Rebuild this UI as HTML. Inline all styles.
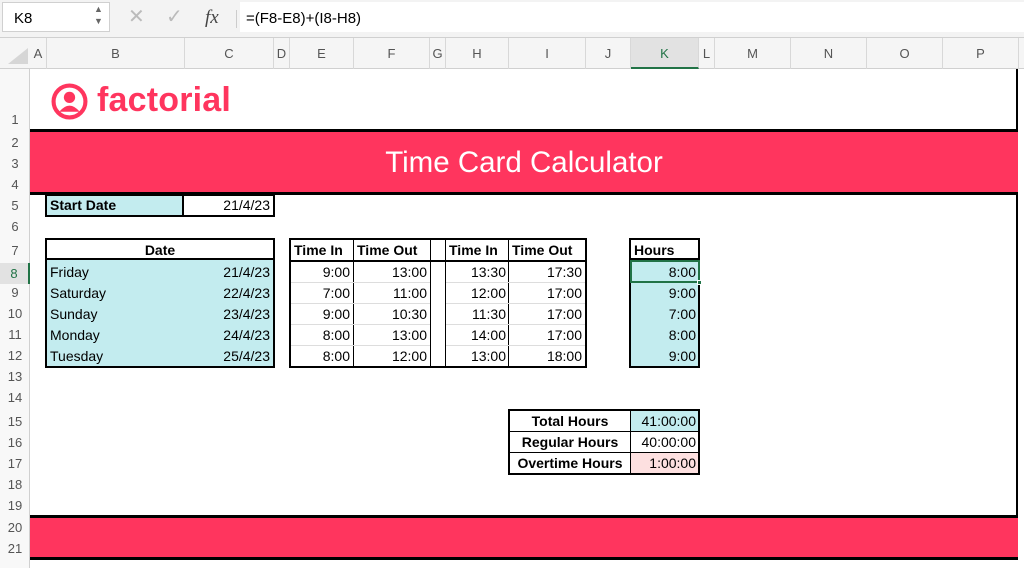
<!DOCTYPE html>
<html><head><meta charset="utf-8"><style>
*{margin:0;padding:0;box-sizing:border-box}
body{width:1024px;height:568px;overflow:hidden;background:#fff;font-family:"Liberation Sans",Arial,sans-serif;position:relative}
.a{position:absolute}
.t{position:absolute;font-size:14px;line-height:21px;color:#000;white-space:nowrap}
.r{text-align:right}
.c{text-align:center}
.b{font-weight:bold}
.col{position:absolute;top:38px;height:31px;line-height:31px;font-size:13px;color:#555;text-align:center;border-right:1px solid #d8d8d8}
.rn{position:absolute;left:0;width:30px;font-size:13px;color:#555;text-align:center}
</style></head><body>
<div class="a" style="left:0;top:0;width:1024px;height:38px;background:#f3f3f3;border-bottom:1px solid #d0d0d0"></div>
<div class="a" style="left:2px;top:2px;width:108px;height:30px;background:#fff;border:1px solid #d0d0d0"></div>
<div class="t" style="left:14px;top:8px;font-size:15px">K8</div>
<div class="t" style="left:94px;top:3px;font-size:9px;color:#666;line-height:12px">▲<br>▼</div>
<div class="t" style="left:128px;top:7px;font-size:20px;color:#bbb">✕</div>
<div class="t" style="left:166px;top:7px;font-size:20px;color:#bbb">✓</div>
<div class="t" style="left:205px;top:7px;font-size:19px;font-style:italic;font-family:'Liberation Serif',serif;color:#444">fx</div>
<div class="a" style="left:236px;top:10px;width:1px;height:18px;background:#ccc"></div>
<div class="a" style="left:240px;top:2px;width:784px;height:30px;background:#fff"></div>
<div class="t" style="left:246px;top:8px;font-size:15px">=(F8-E8)+(I8-H8)</div>
<div class="a" style="left:0;top:38px;width:1024px;height:31px;background:#f5f5f5;border-bottom:1px solid #d0d0d0"></div>
<div class="a" style="left:8px;top:48px;width:0;height:0;border-left:20px solid transparent;border-bottom:16px solid #d6d6d6"></div>
<div class="col" style="left:30px;width:17px">A</div>
<div class="col" style="left:47px;width:138px">B</div>
<div class="col" style="left:185px;width:89px">C</div>
<div class="col" style="left:274px;width:16px">D</div>
<div class="col" style="left:290px;width:64px">E</div>
<div class="col" style="left:354px;width:76px">F</div>
<div class="col" style="left:430px;width:16px">G</div>
<div class="col" style="left:446px;width:63px">H</div>
<div class="col" style="left:509px;width:77px">I</div>
<div class="col" style="left:586px;width:45px">J</div>
<div class="col" style="left:631px;width:68px;color:#217346;background:#e2e2e2;border-bottom:2px solid #217346">K</div>
<div class="col" style="left:699px;width:16px">L</div>
<div class="col" style="left:715px;width:76px">M</div>
<div class="col" style="left:791px;width:76px">N</div>
<div class="col" style="left:867px;width:76px">O</div>
<div class="col" style="left:943px;width:76px">P</div>
<div class="a" style="left:0;top:69px;width:30px;height:499px;background:#f8f8f8;border-right:1px solid #d0d0d0"></div>
<div class="rn" style="top:112px">1</div>
<div class="rn" style="top:135px">2</div>
<div class="rn" style="top:156px">3</div>
<div class="rn" style="top:177px">4</div>
<div class="rn" style="top:198px">5</div>
<div class="rn" style="top:219px">6</div>
<div class="rn" style="top:243px">7</div>
<div class="rn" style="top:263px;color:#217346;background:#e2e2e2;height:21px;line-height:21px;border-right:2px solid #217346">8</div>
<div class="rn" style="top:285px">9</div>
<div class="rn" style="top:306px">10</div>
<div class="rn" style="top:327px">11</div>
<div class="rn" style="top:348px">12</div>
<div class="rn" style="top:369px">13</div>
<div class="rn" style="top:390px">14</div>
<div class="rn" style="top:414px">15</div>
<div class="rn" style="top:435px">16</div>
<div class="rn" style="top:456px">17</div>
<div class="rn" style="top:477px">18</div>
<div class="rn" style="top:498px">19</div>
<div class="rn" style="top:520px">20</div>
<div class="rn" style="top:541px">21</div>
<div class="a" style="left:1016px;top:69px;width:2px;height:490px;background:#000"></div>
<svg class="a" style="left:51px;top:83px" width="37" height="37" viewBox="0 0 36 36">
<circle cx="18" cy="18" r="15.5" fill="none" stroke="#ff355e" stroke-width="4"/>
<circle cx="18" cy="14" r="5.5" fill="#ff355e"/>
<path d="M8 28 Q18 16 28 28 Z" fill="#ff355e"/>
</svg>
<div class="t" style="left:97px;top:81px;font-size:34px;line-height:38px;color:#ff355e;font-weight:bold;letter-spacing:0.2px">factorial</div>
<div class="a" style="left:30px;top:129px;width:988px;height:66px;background:#ff355e;border-top:3px solid #000;border-bottom:3px solid #000"></div>
<div class="t c" style="left:30px;top:145px;width:988px;font-size:29.5px;line-height:36px;color:#fff">Time Card Calculator</div>
<div class="a" style="left:30px;top:515px;width:988px;height:45px;background:#ff355e;border-top:3px solid #000;border-bottom:3px solid #000"></div>
<div class="a" style="left:45px;top:194px;width:230px;height:23px;border:2px solid #000;background:#fff"></div>
<div class="a" style="left:47px;top:196px;width:137px;height:19px;background:#c3ecef;border-right:2px solid #000"></div>
<div class="t b" style="left:50px;top:195px">Start Date</div>
<div class="t r" style="left:186px;top:195px;width:84px">21/4/23</div>
<div class="a" style="left:45px;top:238px;width:230px;height:130px;border:2px solid #000;background:#c3ecef"></div>
<div class="a" style="left:47px;top:240px;width:226px;height:20px;background:#fff;border-bottom:2px solid #000"></div>
<div class="t b c" style="left:47px;top:240px;width:226px">Date</div>
<div class="t" style="left:50px;top:262px">Friday</div><div class="t r" style="left:186px;top:262px;width:84px">21/4/23</div>
<div class="t" style="left:50px;top:283px">Saturday</div><div class="t r" style="left:186px;top:283px;width:84px">22/4/23</div>
<div class="t" style="left:50px;top:304px">Sunday</div><div class="t r" style="left:186px;top:304px;width:84px">23/4/23</div>
<div class="t" style="left:50px;top:325px">Monday</div><div class="t r" style="left:186px;top:325px;width:84px">24/4/23</div>
<div class="t" style="left:50px;top:346px">Tuesday</div><div class="t r" style="left:186px;top:346px;width:84px">25/4/23</div>
<div class="a" style="left:289px;top:238px;width:298px;height:130px;border:2px solid #000;background:#fff"></div>
<div class="a" style="left:291px;top:260px;width:294px;height:2px;background:#000"></div>
<div class="a" style="left:353px;top:240px;width:1px;height:126px;background:#000"></div>
<div class="a" style="left:430px;top:240px;width:1px;height:126px;background:#000"></div>
<div class="a" style="left:445px;top:240px;width:1px;height:126px;background:#000"></div>
<div class="a" style="left:508px;top:240px;width:1px;height:126px;background:#000"></div>
<div class="a" style="left:291px;top:282px;width:139px;height:1px;background:#ddd"></div><div class="a" style="left:446px;top:282px;width:139px;height:1px;background:#ddd"></div>
<div class="a" style="left:291px;top:303px;width:139px;height:1px;background:#ddd"></div><div class="a" style="left:446px;top:303px;width:139px;height:1px;background:#ddd"></div>
<div class="a" style="left:291px;top:324px;width:139px;height:1px;background:#ddd"></div><div class="a" style="left:446px;top:324px;width:139px;height:1px;background:#ddd"></div>
<div class="a" style="left:291px;top:345px;width:139px;height:1px;background:#ddd"></div><div class="a" style="left:446px;top:345px;width:139px;height:1px;background:#ddd"></div>
<div class="t b" style="left:294px;top:240px">Time In</div>
<div class="t b" style="left:357px;top:240px">Time Out</div>
<div class="t b" style="left:449px;top:240px">Time In</div>
<div class="t b" style="left:512px;top:240px">Time Out</div>
<div class="t r" style="left:290px;top:262px;width:60px">9:00</div><div class="t r" style="left:354px;top:262px;width:73px">13:00</div><div class="t r" style="left:446px;top:262px;width:60px">13:30</div><div class="t r" style="left:509px;top:262px;width:73px">17:30</div>
<div class="t r" style="left:290px;top:283px;width:60px">7:00</div><div class="t r" style="left:354px;top:283px;width:73px">11:00</div><div class="t r" style="left:446px;top:283px;width:60px">12:00</div><div class="t r" style="left:509px;top:283px;width:73px">17:00</div>
<div class="t r" style="left:290px;top:304px;width:60px">9:00</div><div class="t r" style="left:354px;top:304px;width:73px">10:30</div><div class="t r" style="left:446px;top:304px;width:60px">11:30</div><div class="t r" style="left:509px;top:304px;width:73px">17:00</div>
<div class="t r" style="left:290px;top:325px;width:60px">8:00</div><div class="t r" style="left:354px;top:325px;width:73px">13:00</div><div class="t r" style="left:446px;top:325px;width:60px">14:00</div><div class="t r" style="left:509px;top:325px;width:73px">17:00</div>
<div class="t r" style="left:290px;top:346px;width:60px">8:00</div><div class="t r" style="left:354px;top:346px;width:73px">12:00</div><div class="t r" style="left:446px;top:346px;width:60px">13:00</div><div class="t r" style="left:509px;top:346px;width:73px">18:00</div>
<div class="a" style="left:629px;top:238px;width:71px;height:130px;border:2px solid #000;background:#c3ecef"></div>
<div class="a" style="left:631px;top:240px;width:67px;height:20px;background:#fff;border-bottom:2px solid #000"></div>
<div class="t b" style="left:634px;top:240px">Hours</div>
<div class="a" style="left:630px;top:260px;width:70px;height:23px;border:2px solid #217346"></div>
<div class="a" style="left:697px;top:280px;width:5px;height:5px;background:#217346;border:1px solid #fff"></div>
<div class="t r" style="left:631px;top:262px;width:65px">8:00</div>
<div class="t r" style="left:631px;top:283px;width:65px">9:00</div>
<div class="t r" style="left:631px;top:304px;width:65px">7:00</div>
<div class="t r" style="left:631px;top:325px;width:65px">8:00</div>
<div class="t r" style="left:631px;top:346px;width:65px">9:00</div>
<div class="a" style="left:508px;top:409px;width:192px;height:66px;border:2px solid #000;background:#fff"></div>
<div class="a" style="left:631px;top:411px;width:67px;height:20px;background:#c3ecef"></div>
<div class="a" style="left:631px;top:453px;width:67px;height:20px;background:#fde0e0"></div>
<div class="a" style="left:630px;top:411px;width:1px;height:62px;background:#000"></div>
<div class="a" style="left:510px;top:431px;width:188px;height:1px;background:#000"></div>
<div class="a" style="left:510px;top:452px;width:188px;height:1px;background:#000"></div>
<div class="t b c" style="left:510px;top:411px;width:120px">Total Hours</div>
<div class="t b c" style="left:510px;top:432px;width:120px">Regular Hours</div>
<div class="t b c" style="left:510px;top:453px;width:120px">Overtime Hours</div>
<div class="t r" style="left:631px;top:411px;width:65px">41:00:00</div>
<div class="t r" style="left:631px;top:432px;width:65px">40:00:00</div>
<div class="t r" style="left:631px;top:453px;width:65px">1:00:00</div>
</body></html>
